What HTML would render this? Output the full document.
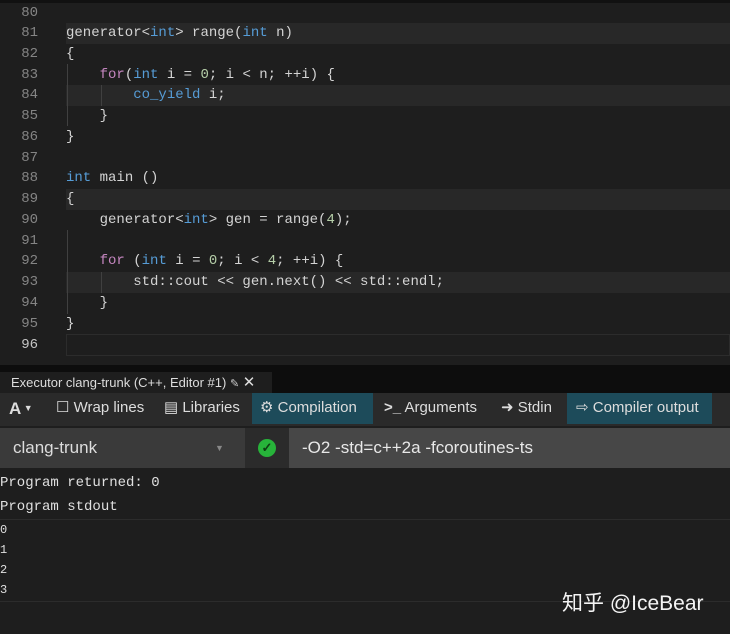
<!DOCTYPE html><html><head><style>
body{margin:0;width:730px;height:634px;background:#1e1e1e;overflow:hidden;font-family:"Liberation Sans",sans-serif;position:relative}
.ed{position:absolute;left:0;top:0;width:730px;height:365px;background:#1e1e1e;border-top:3px solid #111;box-sizing:border-box}
.ln{position:absolute;left:0;width:730px;height:20.8px;font:14px/20.8px "Liberation Mono",monospace;color:#d4d4d4;white-space:pre}
.ln .n{position:absolute;left:0;width:38px;text-align:right;color:#858585}
.ln .c{position:absolute;left:66px}
.hl{background:#282828;left:66px!important}
.k{color:#569cd6}.f{color:#c586c0}.g{color:#b5cea8}
.guide{position:absolute;width:1px;background:#404040}
.cur{position:absolute;left:66px;right:0;top:334px;height:20px;border:1px solid #2c2c2c}
</style></head><body>
<div class="ed">
</div>
<div class="ln" style="top:3px"><span class="n">80</span></div>
<div class="ln hl" style="top:23px;width:664px"></div>
<div class="ln" style="top:23px"><span class="n">81</span><span class="c">generator&lt;<span class="k">int</span>&gt; range(<span class="k">int</span> n)</span></div>
<div class="ln" style="top:44px"><span class="n">82</span><span class="c">{</span></div>
<div class="ln" style="top:65px"><span class="n">83</span><span class="c">    <span class="f">for</span>(<span class="k">int</span> i = <span class="g">0</span>; i &lt; n; ++i) {</span></div>
<div class="ln hl" style="top:85px;width:664px"></div>
<div class="ln" style="top:85px"><span class="n">84</span><span class="c">        <span class="k">co_yield</span> i;</span></div>
<div class="ln" style="top:106px"><span class="n">85</span><span class="c">    }</span></div>
<div class="ln" style="top:127px"><span class="n">86</span><span class="c">}</span></div>
<div class="ln" style="top:148px"><span class="n">87</span></div>
<div class="ln" style="top:168px"><span class="n">88</span><span class="c"><span class="k">int</span> main ()</span></div>
<div class="ln hl" style="top:189px;width:664px"></div>
<div class="ln" style="top:189px"><span class="n">89</span><span class="c">{</span></div>
<div class="ln" style="top:210px"><span class="n">90</span><span class="c">    generator&lt;<span class="k">int</span>&gt; gen = range(<span class="g">4</span>);</span></div>
<div class="ln" style="top:231px"><span class="n">91</span></div>
<div class="ln" style="top:251px"><span class="n">92</span><span class="c">    <span class="f">for</span> (<span class="k">int</span> i = <span class="g">0</span>; i &lt; <span class="g">4</span>; ++i) {</span></div>
<div class="ln hl" style="top:272px;width:664px"></div>
<div class="ln" style="top:272px"><span class="n">93</span><span class="c">        std::cout &lt;&lt; gen.next() &lt;&lt; std::endl;</span></div>
<div class="ln" style="top:293px"><span class="n">94</span><span class="c">    }</span></div>
<div class="ln" style="top:314px"><span class="n">95</span><span class="c">}</span></div>
<div class="cur"></div>
<div class="ln" style="top:335px"><span class="n" style="color:#c6c6c6">96</span></div>
<div class="guide" style="left:67px;top:64px;height:62px"></div>
<div class="guide" style="left:101px;top:85px;height:21px"></div>
<div class="guide" style="left:67px;top:230px;height:84px"></div>
<div class="guide" style="left:101px;top:272px;height:21px"></div>

<div style="position:absolute;left:0;top:365px;width:730px;height:28px;background:#0d0d0d"></div>
<div style="position:absolute;left:0;top:372px;width:272px;height:21px;background:#1e1e1e;color:#ddd;font-size:13px;line-height:22px;padding-left:11px;box-sizing:border-box">Executor clang-trunk (C++, Editor #1) <span style="font-size:11px;color:#ccc">✎</span> <span style="font-size:15px">✕</span></div>

<div style="position:absolute;left:0;top:393px;width:730px;height:33px;background:#2a2a2a;color:#ddd;font-size:15px;line-height:30px;white-space:nowrap">
<span style="position:absolute;left:9px;font-weight:bold;font-size:17px">A<span style="font-size:9px;vertical-align:3px"> ▼</span></span>
<span style="position:absolute;left:56px">☐ Wrap lines</span>
<span style="position:absolute;left:164px">▤ Libraries</span>
<span style="position:absolute;left:252px;width:121px;height:31px;background:#1d4b5a;padding-left:8px;box-sizing:border-box">⚙ Compilation</span>
<span style="position:absolute;left:384px"><b>&gt;_</b> Arguments</span>
<span style="position:absolute;left:501px">➜ Stdin</span>
<span style="position:absolute;left:567px;width:145px;height:31px;background:#1d4b5a;padding-left:9px;box-sizing:border-box">⇨ Compiler output</span>
</div>

<div style="position:absolute;left:0;top:428px;width:245px;height:40px;background:#3a3a3a;color:#ddd;font-size:17px;line-height:40px;padding-left:13px;box-sizing:border-box">clang-trunk<span style="position:absolute;left:215px;font-size:9px;color:#888">▼</span></div>
<div style="position:absolute;left:245px;top:428px;width:44px;height:40px;background:#2b2b2b"><div style="position:absolute;left:13px;top:11px;width:18px;height:18px;border-radius:50%;background:#27b33a;color:#0d3d12;font-size:13px;line-height:18px;text-align:center;font-weight:bold">✓</div></div>
<div style="position:absolute;left:289px;top:428px;width:441px;height:40px;background:#474747;color:#e8e8e8;font-size:17px;line-height:40px;padding-left:13px;box-sizing:border-box">-O2 -std=c++2a -fcoroutines-ts</div>

<div style="position:absolute;left:0;top:472px;width:730px;font:14px/23.5px 'Liberation Mono',monospace;color:#e0e0e0">
<div>Program returned: 0</div><div>Program stdout</div></div>
<div style="position:absolute;left:0;top:519px;width:730px;height:81px;border-top:1px solid #2c2c2c;border-bottom:1px solid #2c2c2c;font:12px/20px 'Liberation Mono',monospace;color:#e0e0e0;padding-top:0">
<div>0</div><div>1</div><div>2</div><div>3</div></div>
<div style="position:absolute;left:562px;top:587px;color:#f4f4f4;font-size:21px;font-family:'Liberation Sans','Noto Sans CJK SC',sans-serif">知乎 @IceBear</div>
</body></html>
